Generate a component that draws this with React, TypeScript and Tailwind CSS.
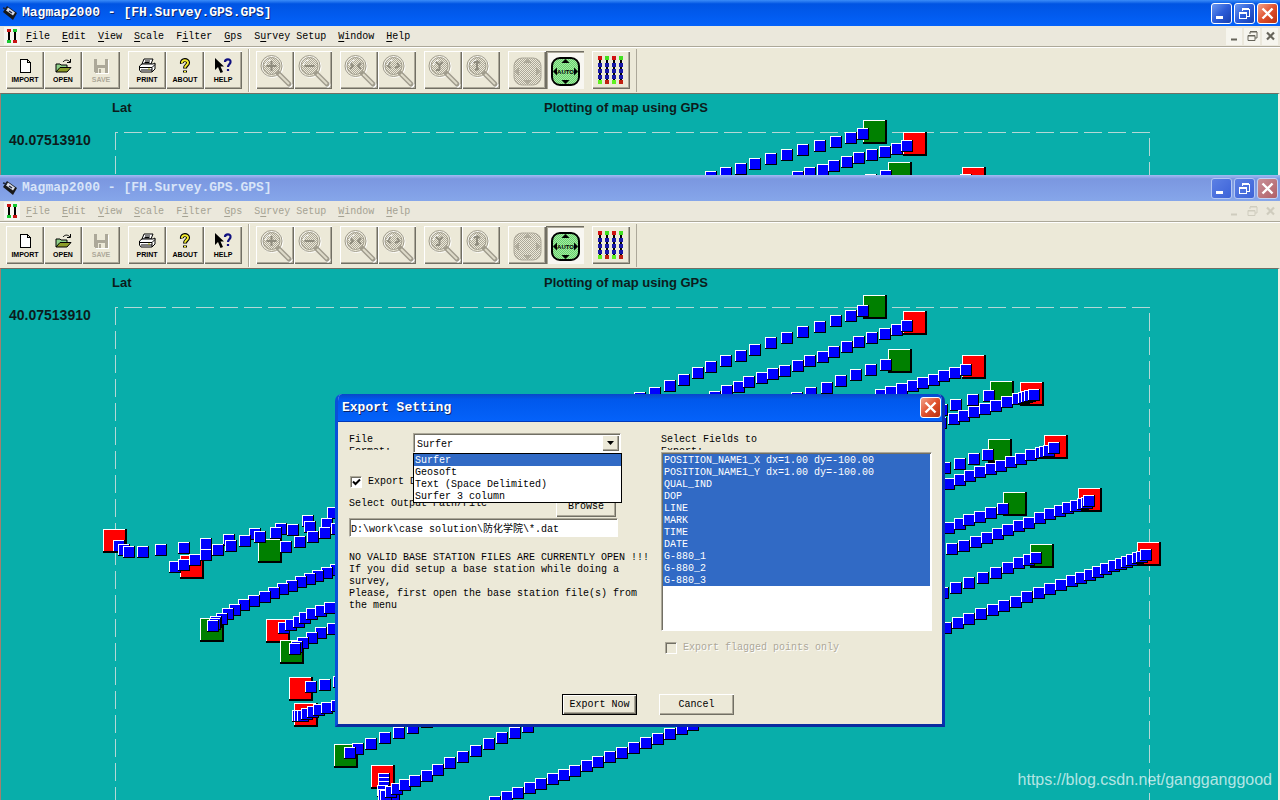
import type { ReactNode } from 'react'

type Point = [number, number]

interface Trail {
  points: Point[]
  color?: string
  flag?: Point
}

const RED = '#ff0000'
const GREEN = '#008000'

// Top-left corners of the survey markers, in the order they are plotted
const TRAILS: Trail[] = [
  { color: GREEN, flag: [863, 295], points: [[634, 392], [649, 387], [664, 380], [678, 374], [692, 367], [705, 361], [720, 355], [735, 350], [749, 344], [765, 337], [781, 332], [797, 326], [814, 321], [830, 315], [845, 310], [857, 305]] },
  { color: RED, flag: [903, 311], points: [[709, 391], [721, 385], [733, 381], [743, 376], [756, 372], [767, 368], [779, 365], [792, 360], [804, 355], [817, 351], [828, 346], [841, 341], [853, 336], [866, 332], [879, 328], [891, 324], [901, 320]] },
  { color: GREEN, flag: [888, 349], points: [[791, 392], [805, 387], [821, 382], [835, 375], [850, 369], [865, 364], [880, 359]] },
  { color: RED, flag: [962, 355], points: [[875, 389], [885, 386], [896, 383], [907, 380], [917, 377], [928, 374], [938, 370], [949, 367], [960, 364]] },
  { color: GREEN, flag: [990, 381], points: [[936, 404], [950, 399], [967, 394], [983, 390]] },
  { color: RED, flag: [1020, 382], points: [[935, 417], [948, 413], [958, 410], [968, 406], [979, 403], [990, 400], [1001, 396], [1012, 393], [1018, 392], [1021, 391], [1024, 390], [1028, 389]] },
  { color: GREEN, flag: [988, 439], points: [[939, 462], [954, 458], [968, 453], [982, 449]] },
  { color: RED, flag: [1044, 435], points: [[943, 478], [954, 474], [964, 470], [974, 466], [985, 463], [995, 460], [1005, 456], [1015, 453], [1025, 449], [1035, 447], [1039, 446], [1043, 445], [1048, 442]] },
  { color: GREEN, flag: [1003, 492], points: [[943, 522], [954, 518], [963, 514], [974, 511], [985, 507], [997, 503]] },
  { color: RED, flag: [1078, 488], points: [[946, 543], [958, 540], [970, 536], [981, 532], [992, 528], [1002, 524], [1013, 520], [1023, 517], [1034, 512], [1044, 508], [1054, 505], [1062, 502], [1070, 500], [1077, 498], [1081, 497], [1083, 495]] },
  { color: GREEN, flag: [1030, 544], points: [[937, 587], [950, 582], [963, 577], [977, 572], [990, 567], [1002, 562], [1013, 557], [1023, 554], [1030, 552]] },
  { color: RED, flag: [1137, 542], points: [[940, 622], [952, 617], [963, 613], [975, 608], [987, 604], [998, 600], [1010, 596], [1021, 591], [1033, 587], [1044, 583], [1055, 579], [1066, 575], [1075, 572], [1084, 569], [1092, 566], [1100, 563], [1108, 560], [1115, 558], [1121, 556], [1126, 554], [1132, 552], [1136, 551], [1140, 549]] },
  { color: RED, flag: [103, 529], points: [[113, 540], [118, 544], [123, 546], [137, 546], [155, 544], [178, 542], [200, 538], [223, 534], [249, 528], [275, 523], [302, 515], [327, 507]] },
  { color: RED, flag: [180, 555], points: [[169, 561], [178, 559], [189, 554], [200, 549], [212, 544], [225, 540], [239, 535], [254, 531], [270, 527], [287, 524], [304, 521], [321, 518]] },
  { color: GREEN, flag: [258, 539], points: [[280, 541], [294, 536], [307, 531], [319, 527], [331, 523]] },
  { color: GREEN, flag: [200, 618], points: [[330, 564], [321, 567], [312, 570], [304, 573], [295, 576], [286, 580], [277, 583], [268, 587], [259, 591], [248, 595], [238, 599], [229, 604], [222, 608], [216, 613], [210, 616], [209, 618], [207, 620]] },
  { color: RED, flag: [266, 619], points: [[278, 622], [285, 619], [293, 616], [299, 612], [306, 608], [315, 605], [324, 602]] },
  { color: GREEN, flag: [280, 640], points: [[327, 623], [315, 627], [306, 632], [297, 637], [291, 641], [289, 643]] },
  { color: RED, flag: [289, 677], points: [[305, 681], [319, 679], [333, 676]] },
  { color: RED, flag: [294, 703], points: [[292, 710], [294, 710], [297, 710], [301, 708], [307, 706], [313, 704], [321, 702], [331, 700]] },
  { color: GREEN, flag: [334, 744], points: [[421, 716], [407, 722], [393, 727], [379, 732], [365, 738], [352, 743], [344, 747]] },
  { color: RED, flag: [371, 765], points: [[388, 794], [378, 773], [378, 777], [378, 781], [377, 785], [378, 789], [380, 790], [385, 786], [391, 783], [399, 779], [409, 775], [421, 770], [432, 764], [444, 757], [457, 751], [470, 745], [483, 738], [496, 732], [509, 727], [522, 721]] },
  { points: [[489, 796], [501, 791], [512, 787], [524, 782], [535, 778], [547, 773], [558, 769], [569, 765], [581, 760], [592, 756], [604, 751], [616, 747], [628, 742], [640, 737], [652, 733], [664, 728], [676, 723], [687, 719]] },
]

const MENU = [
  ['', 'F', 'ile'],
  ['', 'E', 'dit'],
  ['', 'V', 'iew'],
  ['', 'S', 'cale'],
  ['F', 'i', 'lter'],
  ['', 'G', 'ps'],
  ['S', 'u', 'rvey Setup'],
  ['', 'W', 'indow'],
  ['', 'H', 'elp'],
]

const FORMATS = ['Surfer', 'Geosoft', 'Text (Space Delimited)', 'Surfer 3 column']

const FIELDS = [
  'POSITION_NAME1_X dx=1.00 dy=-100.00',
  'POSITION_NAME1_Y dx=1.00 dy=-100.00',
  'QUAL_IND',
  'DOP',
  'LINE',
  'MARK',
  'TIME',
  'DATE',
  'G-880_1',
  'G-880_2',
  'G-880_3',
]

const RAISED = 'bg-[#ece9d8] shadow-[inset_1px_1px_0_#ffffff,inset_-1px_-1px_0_#716f64,inset_-2px_-2px_0_#aca899]'
const SUNKEN = 'border border-t-[#aca899] border-l-[#aca899] border-r-white border-b-white shadow-[inset_1px_1px_0_#716f64]'

/* ---------- caption buttons ---------- */

function CaptionButton({ kind, active = true }: { kind: 'min' | 'restore' | 'close'; active?: boolean }) {
  const tone =
    kind === 'close'
      ? active
        ? 'bg-linear-to-br from-[#f0a088] via-[#e0502c] to-[#b83010] border-white'
        : 'bg-linear-to-br from-[#c89098] to-[#b06068] border-[#c3d3f5]'
      : active
        ? 'bg-linear-to-br from-[#6c98f0] via-[#2c5cd8] to-[#1840b0] border-white'
        : 'bg-linear-to-br from-[#5c80e4] to-[#3c62d8] border-[#b3c7f3]'
  return (
    <button type="button" aria-label={kind} className={`size-[21px] rounded-[3px] border ${tone}`}>
      <svg viewBox="0 0 19 19" className="size-[19px]" fill="none" stroke="#fff" shapeRendering={kind === 'close' ? undefined : 'crispEdges'}>
        {kind === 'min' && <path d="M4 13.5h7" strokeWidth="3" />}
        {kind === 'restore' && <path d="M7 7V5h7v7h-2M7 4.5h7M4.5 8.5h7v6h-7zM4 9h8" />}
        {kind === 'close' && <path d="M4.5 4.5l10 10M14.5 4.5l-10 10" strokeWidth="2.4" />}
      </svg>
    </button>
  )
}

function ChildButtons({ active }: { active: boolean }) {
  const glyphs = [
    <path key="g" d="M5 11.5h6" strokeWidth="2" />,
    <path key="g" d="M6 6V4h7v6h-2M6 3.5h7M4 7.5h7v5h-7zM4 8h7" />,
    <path key="g" d="M5 4.5l7 7M12 4.5l-7 7" strokeWidth="2.2" />,
  ]
  const names = ['Minimize child', 'Restore child', 'Close child']
  return (
    <div className="ml-auto flex gap-0.5">
      {glyphs.map((glyph, i) => (
        <button key={names[i]} type="button" aria-label={names[i]} className={`h-[17px] w-4 ${active ? 'bg-[#f6f5ee]' : ''}`}>
          <svg viewBox="0 0 16 16" className="size-4" fill="none" stroke={active ? '#66645a' : '#cfccbe'}>
            {glyph}
          </svg>
        </button>
      ))}
    </div>
  )
}

/* ---------- toolbar icons ---------- */

function ImportIcon() {
  return (
    <svg viewBox="0 0 24 16" className="h-4 w-6" shapeRendering="crispEdges">
      <path d="M7.5 1.5h7l3 3v10h-10zM14.5 1.5v3h3" fill="#fff" stroke="#000" />
    </svg>
  )
}

function OpenIcon() {
  return (
    <svg viewBox="0 0 24 16" className="h-4 w-6" stroke="#000">
      <path d="M5 14V6h4l1 1h6v3" fill="#8fd08a" />
      <path d="M5 14l4-4.5h11L16 14z" fill="#8c9c28" />
      <path d="M12 4c2-2.5 5-2.5 7 0M19.5 1v3.5H16" fill="none" />
    </svg>
  )
}

function SaveIcon() {
  return (
    <svg viewBox="0 0 24 16" className="h-4 w-6" shapeRendering="crispEdges">
      <path d="M6 2h14v14H7l-1-1z" fill="#fff" />
      <path d="M5 1h14v14H6l-1-1z" fill="#aca899" />
      <path d="M8 1h8v6H8zM9 10h7v5H9z" fill="#ece9d8" />
      <path d="M10 11h2v4h-2z" fill="#aca899" />
    </svg>
  )
}

function PrintIcon() {
  return (
    <svg viewBox="0 0 24 16" className="h-4 w-6" fill="#fff" stroke="#000">
      <path d="M7 6l2-5h9l-2 5z" />
      <path d="M4.5 8L7 6h11l2-1v6l-3 3H6l-1.5-2z" />
      <path d="M4.5 9.5H17l3-3M6 12h11M17 9.5V14M10 3h5M9.5 4.5h5" fill="none" />
      <path d="M13 11h2" stroke="#a0a000" />
    </svg>
  )
}

function AboutIcon() {
  return (
    <svg viewBox="0 0 24 16" className="h-4 w-6" fill="none">
      <path d="M9 5.5C8 1 15.5 1 15 5c0 2-3 2-3 5.5M12 12.5v2" stroke="#000" strokeWidth="4" />
      <path d="M9 5C8.5 1.5 15 1.5 15 4.8c0 2.2-3 2.2-3 5M12 13v1.2" stroke="#f4ec30" strokeWidth="2" />
    </svg>
  )
}

function HelpIcon() {
  return (
    <svg viewBox="0 0 24 16" className="h-4 w-6" fill="none">
      <path d="M4 0v12l3-3 2.5 6 2.500-1-2.500-5.500H13z" fill="#000" />
      <path d="M14 4c0-3.500 6-3.500 5.500 0 0 2-2.500 2.500-2.500 5M17 11v2" stroke="#101080" strokeWidth="2.2" />
    </svg>
  )
}

function LensIcon({ sign }: { sign: string }) {
  return (
    <svg viewBox="0 0 38 38" className="size-[38px]" fill="none">
      <defs>
        <pattern id="dither" width="2" height="2" patternUnits="userSpaceOnUse">
          <rect width="2" height="2" fill="#ece9d8" />
          <rect width="1" height="1" fill="#aca899" />
          <rect x="1" y="1" width="1" height="1" fill="#aca899" />
        </pattern>
      </defs>
      <circle cx="16.5" cy="16" r="10.5" stroke="#fff" />
      <path d="M23 23l11 11" stroke="#fff" strokeWidth="5" strokeLinecap="round" />
      <path d="M22 22l11 11" stroke="#a09c8c" strokeWidth="5" strokeLinecap="round" />
      <path d="M23.5 23.5l9 9" stroke="#dedbca" strokeWidth="2" strokeLinecap="round" />
      <circle cx="15.5" cy="15" r="10.5" stroke="#a09c8c" />
      <circle cx="15.5" cy="15" r="8.5" fill="url(#dither)" stroke="#a09c8c" />
      <path d={sign} stroke="#8f8c7e" strokeWidth="2" />
      <path d="M9.5 14c.5-3 2-4.5 5-5" stroke="#fff" />
    </svg>
  )
}

function FitIcon({ enabled }: { enabled: boolean }) {
  const ink = enabled ? '#000' : '#aca899'
  return (
    <svg viewBox="0 0 38 38" className="size-[38px]">
      <defs>
        <pattern id="green-dither" width="2" height="2" patternUnits="userSpaceOnUse">
          <rect width="2" height="2" fill="#a4eca0" />
          <rect width="1" height="1" fill="#68d070" />
          <rect x="1" y="1" width="1" height="1" fill="#68d070" />
        </pattern>
      </defs>
      <rect x="6" y="7" width="27" height="27" rx="8" fill={enabled ? 'url(#green-dither)' : 'url(#dither)'} stroke={ink} strokeWidth={enabled ? 2 : 1} />
      <path d="M19.5 8l4 4h-8zM19.5 33l4-4h-8zM7 20.5l4-4v8zM32 20.5l-4-4v8z" fill={ink} />
      {enabled && (
        <text x="19.5" y="23" textAnchor="middle" className="font-['Liberation_Sans'] text-[6px] font-bold">
          AUTO
        </text>
      )}
    </svg>
  )
}

function LinesIcon() {
  return (
    <svg viewBox="0 0 38 38" className="size-[38px]" shapeRendering="crispEdges">
      {[8, 15, 22, 29].map((x, i) => (
        <g key={x}>
          <path d={`M${x} 7v24`} stroke="#000" strokeWidth="2" />
          <rect x={x - 2} y="5" width="4" height="4" fill={i % 2 ? '#40e020' : '#d01010'} />
          {[12, 18, 24].map((y) => (
            <rect key={y} x={x - 2} y={y} width="4" height="4" rx="1" fill="#1818a8" />
          ))}
          <rect x={x - 2} y="29" width="4" height="4" fill={i % 2 ? '#c02010' : '#60f020'} />
        </g>
      ))}
    </svg>
  )
}

function ToolButton({ label, icon, disabled }: { label: string; icon: ReactNode; disabled?: boolean }) {
  return (
    <button type="button" disabled={disabled} className={`flex size-[38px] flex-col items-center gap-0.5 pt-[7px] ${RAISED}`}>
      {icon}
      <span className={`font-['Liberation_Sans',sans-serif] text-[7px] leading-2 font-bold ${disabled ? 'text-[#aca899]' : 'text-black'}`}>
        {label}
      </span>
    </button>
  )
}

function IconButton({ name, children, pressed }: { name: string; children: ReactNode; pressed?: boolean }) {
  return (
    <button
      type="button"
      aria-label={name}
      className={`size-[38px] ${pressed ? 'bg-[#f8f7f2] shadow-[inset_1px_1px_0_#716f64,inset_2px_2px_0_#aca899]' : RAISED}`}
    >
      {children}
    </button>
  )
}

function Toolbar() {
  return (
    <div className="flex h-[46px] shrink-0 border-t border-white bg-[#ece9d8] py-px text-black">
      <div className="flex gap-2 border-r border-[#aca899] px-1.5 pt-0.5">
        <div className="flex">
          <ToolButton label="IMPORT" icon={<ImportIcon />} />
          <ToolButton label="OPEN" icon={<OpenIcon />} />
          <ToolButton label="SAVE" icon={<SaveIcon />} disabled />
        </div>
        <div className="flex">
          <ToolButton label="PRINT" icon={<PrintIcon />} />
          <ToolButton label="ABOUT" icon={<AboutIcon />} />
          <ToolButton label="HELP" icon={<HelpIcon />} />
        </div>
      </div>
      <div className="flex gap-2 border-r border-l border-r-[#aca899] border-l-white px-1.5 pt-0.5">
        <div className="flex">
          <IconButton name="Zoom in"><LensIcon sign="M15.5 10v10M10.5 15h10" /></IconButton>
          <IconButton name="Zoom out"><LensIcon sign="M10.5 15h10" /></IconButton>
        </div>
        <div className="flex">
          <IconButton name="Stretch horizontally"><LensIcon sign="M10 12l3 3-3 3M21 12l-3 3 3 3" /></IconButton>
          <IconButton name="Shrink horizontally"><LensIcon sign="M12 11l-2 4 3 2M19 12l2 3-4 2" /></IconButton>
        </div>
        <div className="flex">
          <IconButton name="Stretch vertically"><LensIcon sign="M12 11l3.5 3 3-3M15.5 14v5M12 19h4" /></IconButton>
          <IconButton name="Shrink vertically"><LensIcon sign="M12 12l3-2 3 2M15 10v9M13 19l4-1" /></IconButton>
        </div>
        <div className="flex">
          <IconButton name="Fit all"><FitIcon enabled={false} /></IconButton>
          <IconButton name="Auto fit" pressed><FitIcon enabled /></IconButton>
        </div>
        <IconButton name="Survey lines"><LinesIcon /></IconButton>
      </div>
    </div>
  )
}

/* ---------- plot ---------- */

function Marker({ x, y, size, fill, edge }: { x: number; y: number; size: number; fill: string; edge: number }) {
  return (
    <g>
      <rect x={x} y={y} width={size} height={size} fill="#000" />
      <rect x={x} y={y} width={size - edge} height={size - edge} fill="#fff" />
      <rect x={x + 1} y={y + 1} width={size - edge - 1} height={size - edge - 1} fill={fill} />
    </g>
  )
}

function Plot({ yScale }: { yScale: number }) {
  const top = 295
  const fit = (y: number) => Math.round(top + (y - top) * yScale)
  return (
    <div className="min-h-0 flex-1 overflow-hidden border-t border-r-2 border-l border-t-[#716f64] border-r-[#f1efe2] border-l-[#a08070] bg-[#08aeaa]">
      <svg className="block h-full w-full" shapeRendering="crispEdges">
        <g transform="translate(-1 -269)">
          <g stroke="#b4d8d6" strokeDasharray="18 6" fill="none">
            <path d="M116 307.5H1150" strokeDashoffset="16" />
            <path d="M115.5 307V1000" />
            <path d="M1149.5 313V1000" />
          </g>
          <g className="font-['Liberation_Sans',sans-serif] text-[13px] font-bold" fill="#0c1c1c">
            <text x="112" y="287">Lat</text>
            <text x="544" y="287">Plotting of map using GPS</text>
            <text x="9" y="320" className="text-[14px]">40.07513910</text>
          </g>
          {TRAILS.map(({ flag, color }, i) => flag && <Marker key={i} x={flag[0]} y={fit(flag[1])} size={24} fill={color!} edge={2} />)}
          {TRAILS.map(({ points }, i) => (
            <g key={i}>
              {points.map(([x, y]) => (
                <Marker key={`${x}-${y}`} x={x} y={fit(y)} size={12} fill="#0000ff" edge={1} />
              ))}
            </g>
          ))}
        </g>
      </svg>
    </div>
  )
}

/* ---------- windows ---------- */

function AppWindow({ active, yScale, className }: { active: boolean; yScale: number; className: string }) {
  return (
    <section className={`flex flex-col overflow-hidden ${className}`}>
      <header
        className={`flex h-[26px] shrink-0 items-center gap-1 px-0.5 ${
          active
            ? 'bg-linear-to-b from-[#3a8cf8] via-[#0054e3] via-15% to-[#0462fa] text-white'
            : 'bg-linear-to-b from-[#a4bcf2] via-[#7b97e0] via-15% to-[#86a6ea] text-[#d8e4f8]'
        }`}
      >
        <svg viewBox="0 0 16 16" className="size-4 shrink-0">
          <path d="M5 1l10 7-4 7L1 7z" fill="#181818" />
          <path d="M6 2.5l7 5-2 3-7-5z" fill="#d8dce8" />
          <path d="M7 6l3 2M1 3l4 1" stroke="#202840" strokeWidth="1.5" />
        </svg>
        <h2 className={`flex-1 text-[13px] leading-4 font-bold whitespace-pre ${active ? '[text-shadow:1px_1px_0_#0a246a]' : ''}`}>
          Magmap2000 - [FH.Survey.GPS.GPS]
        </h2>
        <div className="flex gap-0.5">
          <CaptionButton kind="min" active={active} />
          <CaptionButton kind="restore" active={active} />
          <CaptionButton kind="close" active={active} />
        </div>
      </header>
      <nav className={`flex h-[21px] shrink-0 items-center gap-3 border-b border-[#aca899] bg-[#ebe8dc] pr-0.5 pl-1 text-[10px] ${active ? 'text-black' : 'text-[#a5a293]'}`}>
        <svg viewBox="0 0 16 18" className="-mr-1.5 h-[18px] w-4 shrink-0 bg-white/60" shapeRendering="crispEdges">
          <path d="M5 2v13M11 2v13" stroke="#000" strokeWidth="2" />
          <path d="M3 2h4v3H3zM9 13h4v3H9z" fill="#c81414" />
          <path d="M9 2h4v3H9zM3 13h4v3H3z" fill="#18c830" />
        </svg>
        {MENU.map(([before, key, after]) => (
          <a key={key + after} href="#" className="whitespace-pre">
            {before}
            <span className="underline underline-offset-2">{key}</span>
            {after}
          </a>
        ))}
        <ChildButtons active={active} />
      </nav>
      <Toolbar />
      <Plot yScale={yScale} />
    </section>
  )
}

function ExportDialog() {
  return (
    <div
      role="dialog"
      aria-labelledby="export-title"
      className="absolute top-[394px] left-1/2 w-[610px] -translate-x-1/2 overflow-hidden rounded-t-[7px] border-x-[3px] border-b-[3px] border-l-[#0a50d8] border-r-[#0a32b0] border-b-[#0a2ca0] bg-[#ece9d8] text-[10px] leading-3"
    >
      <header className="-mx-[3px] flex h-7 items-center border-b border-[#0038b8] bg-linear-to-b from-[#0848c8] via-[#0058ec] via-20% to-[#0462fa] pr-1 pl-[7px] text-white">
        <h2 id="export-title" className="flex-1 text-[13px] leading-4 font-bold [text-shadow:1px_1px_0_#0a246a]">
          Export Setting
        </h2>
        <CaptionButton kind="close" />
      </header>

      <form className="pt-[11px] pb-[9px] pl-[11px]" onSubmit={(e) => e.preventDefault()}>
        <div className="flex">
          <div className="w-[312px]">
            <div className="flex h-5">
              <label htmlFor="format" className="h-[17px] w-16 overflow-hidden pt-px">
                File<br />Format:
              </label>
              <div className="relative w-52">
                <select id="format" defaultValue="Surfer" className={`h-5 w-full appearance-none bg-white pt-[3px] pl-[3px] ${SUNKEN}`}>
                  {FORMATS.map((f) => (
                    <option key={f}>{f}</option>
                  ))}
                </select>
                <span className={`pointer-events-none absolute top-0.5 right-0.5 flex h-4 w-[17px] items-center justify-center ${RAISED}`}>
                  <svg viewBox="0 0 7 4" className="h-1 w-[7px]">
                    <path d="M0 0h7L3.5 4z" />
                  </svg>
                </span>
                <ul role="listbox" aria-label="File formats" className="absolute top-full left-0 z-10 w-[209px] border border-black bg-white">
                  {FORMATS.map((f, i) => (
                    <li key={f} role="option" aria-selected={i === 0} className={`h-3 pt-px pl-px ${i === 0 ? 'bg-[#316ac5] text-white' : ''}`}>
                      {f}
                    </li>
                  ))}
                </ul>
              </div>
            </div>

            <label className="mt-[22px] flex h-[13px] items-center gap-1.5 pl-px">
              <input type="checkbox" defaultChecked className={`peer size-3 appearance-none bg-white ${SUNKEN}`} />
              <svg viewBox="0 0 12 12" className="pointer-events-none -ml-[18px] size-3" fill="none" stroke="#000" strokeWidth="2">
                <path d="M3 5.5L5.5 8 10 3.5" />
              </svg>
              Export Date
            </label>

            <div className="mt-2 flex w-[267px] items-start justify-between">
              <label htmlFor="path" className="leading-4">Select Output Path/File</label>
              <button type="button" className={`h-[21px] w-[60px] ${RAISED}`}>Browse</button>
            </div>
            <input
              id="path"
              type="text"
              defaultValue="D:\work\case solution\防化学院\*.dat"
              className={`mt-px block h-[19px] w-[269px] bg-white pl-px ${SUNKEN}`}
            />

            <div className="mt-[15px] w-[302px]">
              <p>NO VALID BASE STATION FILES ARE CURRENTLY OPEN !!!</p>
              <p>If you did setup a base station while doing a survey,</p>
              <p>Please, first open the base station file(s) from the menu</p>
            </div>
          </div>

          <div className="w-[271px]">
            <div id="fields-label" className="h-[17px] w-[110px] overflow-hidden pt-px">
              Select Fields to<br />Export:
            </div>
            <ul role="listbox" aria-multiselectable aria-labelledby="fields-label" className={`mt-0.5 h-[179px] bg-white p-px ${SUNKEN}`}>
              {FIELDS.map((f) => (
                <li key={f} role="option" aria-selected className="h-3 bg-[#316ac5] pt-px pl-px text-white">
                  {f}
                </li>
              ))}
            </ul>
            <label className="mt-[10px] flex h-[13px] items-center gap-1.5 pl-1 text-[#aca899] [text-shadow:1px_1px_0_#ffffff]">
              <input type="checkbox" disabled className={`size-3 appearance-none ${SUNKEN}`} />
              Export flagged points only
            </label>
          </div>
        </div>

        <div className="mt-10 flex gap-[22px] pl-[213px]">
          <button type="submit" className={`h-[21px] w-[75px] border border-black ${RAISED}`}>Export Now</button>
          <button type="button" className={`h-[21px] w-[75px] ${RAISED}`}>Cancel</button>
        </div>
      </form>
    </div>
  )
}

export default function App() {
  return (
    <main className="relative flex h-screen flex-col overflow-hidden bg-[#08aeaa] font-['Liberation_Mono','Noto_Sans_CJK_SC',monospace] text-black">
      <AppWindow active yScale={0.78} className="h-[175px] shrink-0" />
      <AppWindow active={false} yScale={1} className="min-h-0 flex-1" />
      <ExportDialog />
      <p className="absolute right-2 bottom-2 font-['Liberation_Sans',sans-serif] text-[16px] leading-6 text-white/70">
        https://blog.csdn.net/gangganggood
      </p>
    </main>
  )
}
